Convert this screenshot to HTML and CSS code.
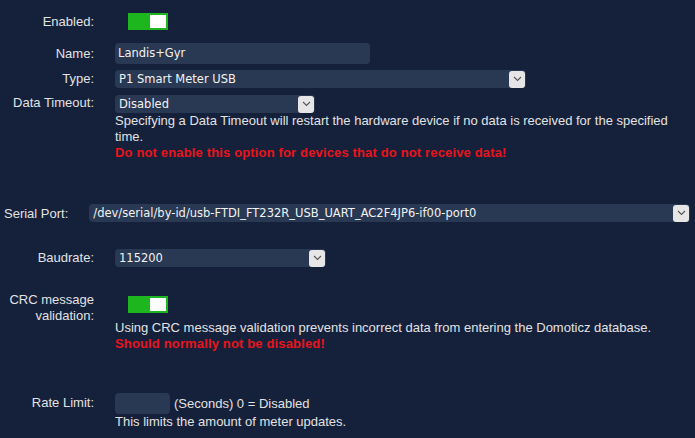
FILE: index.html
```html
<!DOCTYPE html>
<html>
<head>
<meta charset="utf-8">
<link rel="stylesheet" href="styles.css">
</head>
<body>
<div class="form">
  <div class="row row-enabled">
    <label class="lbl">Enabled:</label>
    <div class="ctl"><span class="toggle"><span class="knob"></span></span></div>
  </div>
  <div class="row row-name">
    <label class="lbl">Name:</label>
    <div class="ctl"><div class="input w-name">Landis+Gyr</div></div>
  </div>
  <div class="row row-type">
    <label class="lbl">Type:</label>
    <div class="ctl"><div class="select w-type"><span class="val">P1 Smart Meter USB</span><span class="arrow"><svg width="9" height="6" viewBox="0 0 9 6"><path d="M1 1 L4.5 4.5 L8 1" fill="none" stroke="#555" stroke-width="1.1"/></svg></span></div></div>
  </div>
  <div class="row row-timeout">
    <label class="lbl">Data Timeout:</label>
    <div class="ctl">
      <div class="select w-timeout"><span class="val">Disabled</span><span class="arrow"><svg width="9" height="6" viewBox="0 0 9 6"><path d="M1 1 L4.5 4.5 L8 1" fill="none" stroke="#555" stroke-width="1.1"/></svg></span></div>
      <p class="desc">Specifying a Data Timeout will restart the hardware device if no data is received for the specified time.</p>
      <p class="warn">Do not enable this option for devices that do not receive data!</p>
    </div>
  </div>
  <div class="serial">
    <label class="slbl">Serial Port:</label>
    <div class="select w-serial"><span class="val">/dev/serial/by-id/usb-FTDI_FT232R_USB_UART_AC2F4JP6-if00-port0</span><span class="arrow"><svg width="9" height="6" viewBox="0 0 9 6"><path d="M1 1 L4.5 4.5 L8 1" fill="none" stroke="#555" stroke-width="1.1"/></svg></span></div>
  </div>
  <div class="row row-baud">
    <label class="lbl">Baudrate:</label>
    <div class="ctl"><div class="select w-baud"><span class="val">115200</span><span class="arrow"><svg width="9" height="6" viewBox="0 0 9 6"><path d="M1 1 L4.5 4.5 L8 1" fill="none" stroke="#555" stroke-width="1.1"/></svg></span></div></div>
  </div>
  <div class="row row-crc">
    <label class="lbl lbl-multi">CRC message validation:</label>
    <div class="ctl">
      <span class="toggle toggle-crc"><span class="knob"></span></span>
      <p class="desc desc-crc">Using CRC message validation prevents incorrect data from entering the Domoticz database.</p>
      <p class="warn">Should normally not be disabled!</p>
    </div>
  </div>
  <div class="row row-rate">
    <label class="lbl">Rate Limit:</label>
    <div class="ctl">
      <div class="rate-line"><div class="input w-rate"></div><span class="unit">(Seconds) 0 = Disabled</span></div>
      <p class="desc">This limits the amount of meter updates.</p>
    </div>
  </div>
</div>
</body>
</html>
```

FILE: styles.css
```css
html, body {
  margin: 0;
  padding: 0;
  background: #15213b;
}
body {
  width: 695px;
  height: 438px;
  overflow: hidden;
  font-family: "Liberation Sans", Arial, sans-serif;
  font-size: 13px;
  color: #e2e2e2;
}
.form {
  padding-top: 13px;
}
.row {
  display: grid;
  grid-template-columns: 94px 1fr;
  column-gap: 21px;
  align-items: center;
}
.lbl {
  text-align: right;
  line-height: 16px;
}
.ctl {
  min-width: 0;
}
.toggle {
  display: block;
  position: relative;
  width: 40px;
  height: 17px;
  margin-left: 13px;
  background: #1eb61e;
}
.knob {
  position: absolute;
  right: 2px;
  top: 2px;
  width: 16px;
  height: 13px;
  background: #ffffff;
}
.input, .select {
  background: #2a3953;
  border-radius: 4px;
  box-sizing: border-box;
  font-family: "DejaVu Sans", Verdana, sans-serif;
  font-size: 11.5px;
  color: #f2f2f2;
}
.input {
  height: 21px;
  line-height: 21px;
  padding-left: 3px;
}
.select {
  display: flex;
  align-items: center;
  height: 18px;
  padding-left: 4px;
  padding-right: 1px;
}
.select .val {
  flex: 1;
  white-space: nowrap;
  overflow: hidden;
}
.arrow {
  display: flex;
  align-items: center;
  justify-content: center;
  width: 16px;
  height: 17px;
  background: #e6e6e6;
  border-radius: 3px;
}
.row-name { margin-top: 13px; }
.row-type { margin-top: 6px; }
.row-timeout { margin-top: 7px; align-items: start; }
.w-name { width: 255px; }
.w-type { width: 411px; }
.w-timeout { width: 200px; }
.w-serial { width: 601px; flex-shrink: 0; }
.w-baud { width: 211px; }
.w-rate { width: 55px; }
.desc, .warn {
  margin: 0;
  line-height: 16px;
  padding-right: 22px;
}
.warn {
  color: #e8141b;
  font-weight: bold;
  letter-spacing: 0.15px;
}
.serial {
  display: flex;
  align-items: center;
  gap: 21px;
  padding-left: 4px;
  margin-top: 43px;
}
.slbl {
  white-space: nowrap;
  flex-shrink: 0;
}
.row-baud { margin-top: 27px; }
.row-crc {
  margin-top: 25px;
  align-items: start;
}
.toggle-crc { margin-top: 4px; }
.desc-crc { margin-top: 7px; }
.row-rate {
  margin-top: 41px;
  align-items: start;
}
.row-rate .lbl { padding-top: 2px; }
.rate-line {
  display: flex;
  align-items: center;
  gap: 4px;
}
.unit { line-height: 21px; }
```
